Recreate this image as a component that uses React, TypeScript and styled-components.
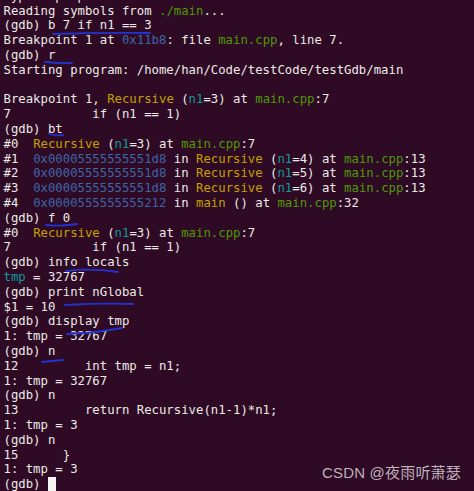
import React from "react";
import styled, { createGlobalStyle } from "styled-components";

const Global = createGlobalStyle`
  html, body { margin: 0; padding: 0; background: #2f0a24; }
  body { width: 474px; height: 491px; overflow: hidden; }
`;

const Screen = styled.div`
  position: relative;
  width: 474px;
  height: 491px;
  overflow: hidden;
  background: #2f0a24;
  padding-left: 3.5px;
  box-sizing: border-box;
  font-family: "DejaVu Sans Mono", "Liberation Mono", monospace;
  font-size: 12.3px;
  color: #ecebe8;
`;

const Line = styled.div<{ $cut?: boolean }>`
  height: 14.8px;
  line-height: 14.8px;
  white-space: pre;
  margin-top: ${(p) => (p.$cut ? "-11.2px" : "0")};
`;

type Tone = "y" | "g" | "b" | "c";
const toneColor: Record<Tone, string> = {
  y: "#c4a000",
  g: "#4e9a06",
  b: "#3d66a8",
  c: "#11989a",
};

const C = styled.span<{ $t: Tone }>`
  color: ${(p) => toneColor[p.$t]};
`;

const Cursor = styled.span`
  display: inline-block;
  width: 7.6px;
  height: 14.8px;
  vertical-align: top;
  background: #f4f4f4;
`;

const Marks = styled.svg`
  position: absolute;
  left: 0;
  top: 0;
  pointer-events: none;
`;

const Watermark = styled.div`
  position: absolute;
  right: 13px;
  bottom: 9px;
  font-family: "Liberation Sans", "Noto Sans CJK SC", sans-serif;
  font-size: 15px;
  color: rgba(220, 208, 218, 0.85);
  letter-spacing: 0.2px;
`;

const Frame = ({ n, val }: { n: string; val: string }) => (
  <Line>
    {`#${n}  `}
    <C $t="b">{n === "4" ? "0x0000555555555212" : "0x00005555555551d8"}</C>
    {" in "}
    <C $t="y">Recursive</C>
    {" ("}
    <C $t="c">n1</C>
    {`=${val}) at `}
    <C $t="g">main.cpp</C>
    {":13"}
  </Line>
);

const marks = [
  "M53 34 Q100 32.5 150 33",
  "M45 62 Q58 63.5 72 63",
  "M49 134 Q56 136 63 135",
  "M46 225 Q60 226.5 77 224",
  "M66 271 Q90 268 118 272",
  "M65 305 Q100 303 133 304",
  "M67 334 Q95 333 122 328",
  "M42 362 Q52 361 63 360",
];

export default function App() {
  return (
    <>
      <Global />
      <Screen>
        <Line $cut>Type "apropos word" to search for commands related to "word"...</Line>
        <Line>
          {"Reading symbols from "}
          <C $t="g">./main</C>
          {"..."}
        </Line>
        <Line>(gdb) b 7 if n1 == 3</Line>
        <Line>
          {"Breakpoint 1 at "}
          <C $t="b">0x11b8</C>
          {": file "}
          <C $t="g">main.cpp</C>
          {", line 7."}
        </Line>
        <Line>(gdb) r</Line>
        <Line>Starting program: /home/han/Code/testCode/testGdb/main</Line>
        <Line> </Line>
        <Line>
          {"Breakpoint 1, "}
          <C $t="y">Recursive</C>
          {" ("}
          <C $t="c">n1</C>
          {"=3) at "}
          <C $t="g">main.cpp</C>
          {":7"}
        </Line>
        <Line>{"7           if (n1 == 1)"}</Line>
        <Line>(gdb) bt</Line>
        <Line>
          {"#0  "}
          <C $t="y">Recursive</C>
          {" ("}
          <C $t="c">n1</C>
          {"=3) at "}
          <C $t="g">main.cpp</C>
          {":7"}
        </Line>
        <Frame n="1" val="4" />
        <Frame n="2" val="5" />
        <Frame n="3" val="6" />
        <Line>
          {"#4  "}
          <C $t="b">0x0000555555555212</C>
          {" in "}
          <C $t="y">main</C>
          {" () at "}
          <C $t="g">main.cpp</C>
          {":32"}
        </Line>
        <Line>(gdb) f 0</Line>
        <Line>
          {"#0  "}
          <C $t="y">Recursive</C>
          {" ("}
          <C $t="c">n1</C>
          {"=3) at "}
          <C $t="g">main.cpp</C>
          {":7"}
        </Line>
        <Line>{"7           if (n1 == 1)"}</Line>
        <Line>(gdb) info locals</Line>
        <Line>
          <C $t="c">tmp</C>
          {" = 32767"}
        </Line>
        <Line>(gdb) print nGlobal</Line>
        <Line>$1 = 10</Line>
        <Line>(gdb) display tmp</Line>
        <Line>1: tmp = 32767</Line>
        <Line>(gdb) n</Line>
        <Line>{"12         int tmp = n1;"}</Line>
        <Line>1: tmp = 32767</Line>
        <Line>(gdb) n</Line>
        <Line>{"13         return Recursive(n1-1)*n1;"}</Line>
        <Line>1: tmp = 3</Line>
        <Line>(gdb) n</Line>
        <Line>{"15      }"}</Line>
        <Line>1: tmp = 3</Line>
        <Line>
          {"(gdb) "}
          <Cursor />
        </Line>
        <Marks width="474" height="491" viewBox="0 0 474 491">
          {marks.map((d, i) => (
            <path key={i} d={d} fill="none" stroke="#2233d0" strokeWidth="1.8" strokeLinecap="round" />
          ))}
        </Marks>
        <Watermark>CSDN @夜雨听萧瑟</Watermark>
      </Screen>
    </>
  );
}
